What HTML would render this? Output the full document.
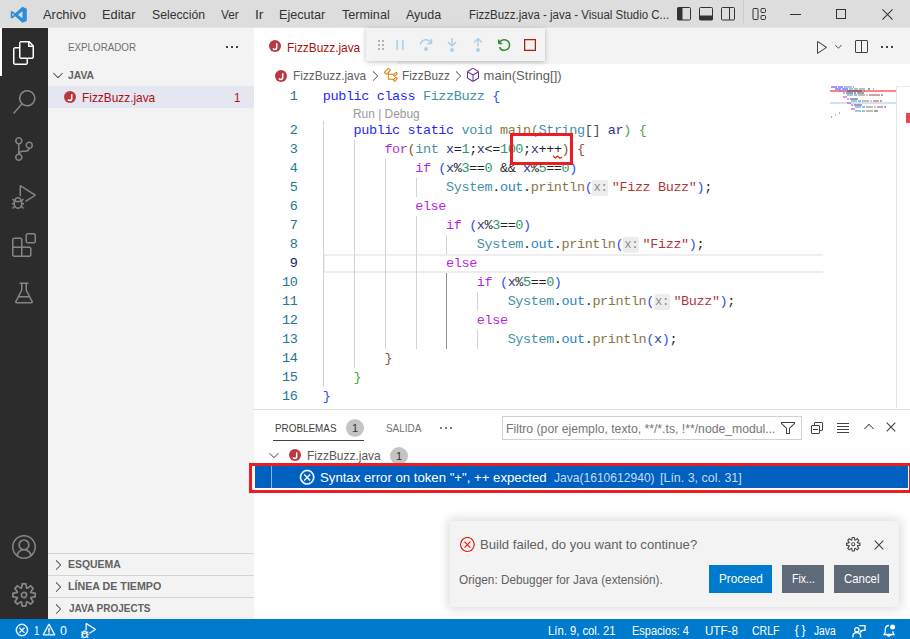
<!DOCTYPE html>
<html><head><meta charset="utf-8"><title>FizzBuzz.java - java - Visual Studio Code</title>
<style>
*{box-sizing:border-box;margin:0;padding:0}
html,body{width:910px;height:639px;overflow:hidden;background:#fff}
body{font-family:"Liberation Sans",sans-serif;font-size:13px;color:#333;position:relative}
.abs{position:absolute}
.t{position:absolute;white-space:nowrap;line-height:1}
.jic{width:12px;height:12px;border-radius:6px;background:#b8383d;color:#fff;font-size:9px;font-weight:bold;line-height:12.5px;text-align:center}
.code{opacity:0.86;position:absolute;font-family:"Liberation Mono",monospace;font-size:13.5px;letter-spacing:-0.4px;color:#000;white-space:pre;height:19px;line-height:19px}
.ln{position:absolute;font-family:"Liberation Mono",monospace;font-size:13.5px;letter-spacing:-0.4px;left:254px;width:43.4px;text-align:right;color:#237893;height:19px;line-height:19px}
.k{color:#0000ff}.c{color:#af00db}.ty{color:#267f99}.n{color:#098658}.s{color:#a31515}.v{color:#001080}.f{color:#795e26}.o{color:#0070c1}
.b1{color:#0431fa}.b2{color:#319331}.b3{color:#7b3814}
.hint{display:inline-block;background:#ebebeb;color:#7a7a7a;font-size:12.2px;letter-spacing:-0.4px;height:16px;line-height:16px;width:16px;text-align:center;margin-right:3.4px;vertical-align:-0.3px;border-radius:2px}
.badge{position:absolute;width:18px;height:18px;border-radius:9px;background:#c4c4c4;color:#333;font-size:11px;line-height:18px;text-align:center}
.btn{position:absolute;height:28px;line-height:28px;color:#fff;font-size:13px;text-align:center}
</style></head><body>
<div class="abs" style="left:0px;top:0px;width:910px;height:28px;background:#dddddd;"></div>
<div class="abs" style="left:0px;top:27px;width:910px;height:1.5px;background:#e6e6e6;"></div>
<div class="abs" style="left:0px;top:28px;width:48px;height:591px;background:#2c2c2c;"></div>
<div class="abs" style="left:48px;top:28px;width:206px;height:591px;background:#f3f3f3;"></div>
<div class="abs" style="left:254px;top:28px;width:656px;height:36px;background:#f3f3f3;"></div>
<div class="abs" style="left:254px;top:28px;width:143px;height:36px;background:#ffffff;"></div>
<div class="abs" style="left:0px;top:619px;width:910px;height:20px;background:#007acc;"></div>
<svg class="abs" style="left:9.700px;top:5.500px" width="17.500" height="17.500" viewBox="0 0 100 100"><path d="M71 4 L96 15 V85 L71 96 L30 58 L12 72 L4 67 V33 L12 28 L30 42 Z M71 30 L45 50 L71 70 Z M14 40 V60 L24 50 Z" fill="#2a8fd9" fill-rule="evenodd"/></svg>
<div class="t" style="left:43.20px;top:8.00px;font-size:13px;color:#333;transform:scaleX(0.9917);transform-origin:0 0;">Archivo</div>
<div class="t" style="left:102.20px;top:8.00px;font-size:13px;color:#333;transform:scaleX(0.9833);transform-origin:0 0;">Editar</div>
<div class="t" style="left:151.90px;top:8.00px;font-size:13px;color:#333;transform:scaleX(0.9401);transform-origin:0 0;">Selección</div>
<div class="t" style="left:221.40px;top:8.00px;font-size:13px;color:#333;transform:scaleX(0.9121);transform-origin:0 0;">Ver</div>
<div class="t" style="left:254.90px;top:8.00px;font-size:13px;color:#333;transform:scaleX(1.0688);transform-origin:0 0;">Ir</div>
<div class="t" style="left:279.20px;top:8.00px;font-size:13px;color:#333;transform:scaleX(0.9685);transform-origin:0 0;">Ejecutar</div>
<div class="t" style="left:341.70px;top:8.00px;font-size:13px;color:#333;transform:scaleX(0.9710);transform-origin:0 0;">Terminal</div>
<div class="t" style="left:405.70px;top:8.00px;font-size:13px;color:#333;transform:scaleX(0.9607);transform-origin:0 0;">Ayuda</div>
<div class="t" style="left:469.26px;top:8.84px;font-size:12px;color:#333;transform:scaleX(0.9567);transform-origin:0 0;">FizzBuzz.java - java - Visual Studio C...</div>
<svg class="abs" style="left:677px;top:7px" width="14" height="14" viewBox="0 0 14 14"><rect x="0.5" y="0.5" width="13" height="12.5" rx="1" fill="none" stroke="#333"/><rect x="0.5" y="0.5" width="5" height="12.5" fill="#333"/></svg>
<svg class="abs" style="left:699px;top:7px" width="14" height="14" viewBox="0 0 14 14"><rect x="0.5" y="0.5" width="13" height="12.5" rx="1" fill="none" stroke="#333"/><rect x="0.5" y="8.5" width="13" height="4.5" fill="#333"/></svg>
<svg class="abs" style="left:721px;top:7px" width="14" height="14" viewBox="0 0 14 14"><rect x="0.5" y="0.5" width="13" height="12.5" rx="1" fill="none" stroke="#333"/><path d="M8.5 0.500V13" stroke="#333"/></svg>
<div class="abs" style="left:743px;top:0px;width:1px;height:23px;background:#cbcbcb;"></div>
<svg class="abs" style="left:752px;top:7px" width="15" height="14" viewBox="0 0 15 14"><rect x="1" y="1.500" width="5" height="11" rx="1" fill="none" stroke="#333"/><rect x="9" y="1.500" width="4.500" height="4" rx="1" fill="none" stroke="#333"/><rect x="9" y="8.500" width="4.500" height="4" rx="1" fill="none" stroke="#333"/></svg>
<div class="abs" style="left:790px;top:14px;width:11px;height:1px;background:#333;"></div>
<div class="abs" style="left:836px;top:9px;width:10px;height:10px;border:1px solid #333"></div>
<svg class="abs" style="left:881.500px;top:8.500px" width="11" height="11" viewBox="0 0 12 12"><path d="M0.500 0.500L11.500 11.500M11.500 0.500L0.500 11.500" stroke="#333" stroke-width="1.100"/></svg>
<div class="abs" style="left:0px;top:28px;width:2px;height:48px;background:#fff;"></div>
<svg class="abs" style="left:12px;top:40.7px" width="24" height="24" viewBox="0 0 24 24"><path fill="#fff"  d="M17.5 0h-9L7 1.5V6H2.5L1 7.5v15.070L2.500 24h12.070L16 22.570V18h4.700l1.300-1.430V4.500L17.500 0zm0 2.120l2.380 2.380H17.500V2.120zm-3 20.380h-12v-15H7v9.070L8.500 18h6v4.500zm6-6h-12v-15H16V6h4.500v10.500z"/></svg>
<svg class="abs" style="left:12px;top:89.7px" width="24" height="24" viewBox="0 0 24 24"><path fill="#858585"  d="M15.250 0a8.250 8.250 0 0 0-6.180 13.720L1 22.880l1.120 1 8.050-9.120A8.251 8.251 0 1 0 15.250.010V0zm0 15a6.750 6.750 0 1 1 0-13.500 6.750 6.750 0 0 1 0 13.500z"/></svg>
<svg class="abs" style="left:12px;top:137px" width="24" height="24" viewBox="0 0 24 24"><path fill="#858585"  d="M21.007 8.222A3.738 3.738 0 0 0 15.045 5.200a3.737 3.737 0 0 0 1.156 6.583 2.988 2.988 0 0 1-2.668 1.670h-2.990a4.456 4.456 0 0 0-2.989 1.165V7.400a3.737 3.737 0 1 0-1.494 0v9.117a3.776 3.776 0 1 0 1.816.099 2.990 2.990 0 0 1 2.668-1.667h2.990a4.484 4.484 0 0 0 4.223-3.039 3.736 3.736 0 0 0 3.250-3.687zM4.565 3.738a2.242 2.242 0 1 1 4.484 0 2.242 2.242 0 0 1-4.484 0zm4.484 16.441a2.242 2.242 0 1 1-4.484 0 2.242 2.242 0 0 1 4.484 0zm8.221-9.715a2.242 2.242 0 1 1 0-4.485 2.242 2.242 0 0 1 0 4.485z"/></svg>
<svg class="abs" style="left:12px;top:185px" width="24" height="24" viewBox="0 0 24 24"><path fill="#858585"  d="M10.940 13.500l-1.320 1.320a3.730 3.730 0 0 0-7.240 0L1.060 13.500 0 14.560l1.720 1.720-.22.22V18H0v1.500h1.500v.08c.077.489.214.966.41 1.420L0 22.940 1.060 24l1.650-1.650A4.308 4.308 0 0 0 6 24a4.310 4.310 0 0 0 3.290-1.650L10.940 24 12 22.940 10.090 21c.198-.464.336-.951.41-1.450v-.1H12V18h-1.500v-1.500l-.22-.22L12 14.560l-1.060-1.060zM6 13.500a2.250 2.250 0 0 1 2.250 2.250h-4.500A2.250 2.250 0 0 1 6 13.500zm3 6a3.330 3.330 0 0 1-3 3 3.330 3.330 0 0 1-3-3v-2.250h6v2.250zm14.760-9.900v1.260L13.500 17.370V15.600l8.500-5.370L9 2v9.460a5.070 5.070 0 0 0-1.500-.72V.630L8.640 0l15.120 9.600z"/></svg>
<svg class="abs" style="left:12px;top:233px" width="24" height="24" viewBox="0 0 24 24"><path fill="#858585"  d="M13.500 1.500L15 0h7.500L24 1.500V9l-1.500 1.500H15L13.500 9V1.500zm1.500 0V9h7.500V1.500H15zM0 15V6l1.500-1.500H9L10.500 6v7.500H18l1.500 1.500v7.500L18 24H1.500L0 22.500V15zm9-1.500V6H1.500v7.500H9zM9 15H1.500v7.500H9V15zm1.500 7.500H18V15h-7.500v7.500z"/></svg>
<svg class="abs" style="left:12px;top:281px" width="24" height="24" viewBox="0 0 16 16"><path fill="#858585"  d="M13.893 13.558L10 6.006v-4h1v-1H9.994V1l-.456.005H5V2h1v3.952l-3.894 7.609A1 1 0 0 0 3 15h10a1 1 0 0 0 .893-1.442zm-7-7.150L7 6V2h2v4l.1.420 1.844 3.580H5.056l1.837-3.592zM3 14l1.543-3h6.914L13 14H3z"/></svg>
<svg class="abs" style="left:12px;top:535px" width="24" height="24" viewBox="0 0 16 16"><path fill="#858585"  d="M16 7.992C16 3.580 12.416 0 8 0S0 3.580 0 7.992c0 2.430 1.104 4.620 2.832 6.090.016.016.032.016.032.032.144.112.288.224.448.336.08.048.144.111.224.175A7.980 7.980 0 0 0 8.016 16a7.980 7.980 0 0 0 4.480-1.375c.08-.048.144-.111.224-.16.144-.111.304-.223.448-.335.016-.016.032-.016.032-.032 1.696-1.487 2.800-3.676 2.800-6.106zm-8 7.001c-1.504 0-2.880-.48-4.016-1.279.016-.128.048-.255.08-.383a4.170 4.170 0 0 1 .416-.991c.176-.304.384-.576.640-.816.240-.240.528-.463.816-.639.304-.176.624-.304.976-.4A4.150 4.150 0 0 1 8 10.342a4.185 4.185 0 0 1 2.928 1.166c.368.368.656.8.864 1.295.112.288.192.592.24.911A7.030 7.030 0 0 1 8 14.993zm-2.448-7.400a2.490 2.490 0 0 1-.208-1.024c0-.351.064-.703.208-1.023.144-.320.336-.607.576-.847.240-.240.528-.431.848-.575.320-.144.672-.208 1.024-.208.368 0 .704.064 1.024.208.320.144.608.336.848.575.240.240.432.528.576.847.144.320.208.672.208 1.023 0 .368-.064.704-.208 1.023a2.840 2.840 0 0 1-.576.848 2.840 2.840 0 0 1-.848.575 2.715 2.715 0 0 1-2.064 0 2.840 2.840 0 0 1-.848-.575 2.526 2.526 0 0 1-.560-.848zm7.424 5.306c0-.032-.016-.048-.016-.08a5.220 5.220 0 0 0-.688-1.406 4.883 4.883 0 0 0-1.088-1.135 5.207 5.207 0 0 0-1.040-.608 2.820 2.820 0 0 0 .464-.383 4.200 4.200 0 0 0 .624-.784 3.624 3.624 0 0 0 .528-1.934 3.710 3.710 0 0 0-.288-1.470 3.799 3.799 0 0 0-.816-1.199 3.845 3.845 0 0 0-1.200-.8 3.720 3.720 0 0 0-1.472-.287 3.720 3.720 0 0 0-1.472.288 3.631 3.631 0 0 0-1.200.815 3.840 3.840 0 0 0-.8 1.199 3.710 3.710 0 0 0-.288 1.470c0 .352.048.688.144 1.007.096.336.224.640.4.927.160.288.384.544.624.784.144.144.304.271.480.383a5.120 5.120 0 0 0-1.040.624c-.416.320-.784.703-1.088 1.119a4.999 4.999 0 0 0-.688 1.406c-.016.032-.016.064-.016.080C1.776 11.636.992 9.910.992 7.992.992 4.140 4.144.991 8 .991s7.008 3.149 7.008 7.001a6.960 6.960 0 0 1-2.032 4.907z"/></svg>
<svg class="abs" style="left:12px;top:583px" width="24" height="24" viewBox="0 0 24 24"><path fill="#858585" fill-rule="evenodd" d="M19.850 8.750l4.150.830v4.840l-4.150.830 2.350 3.520-3.430 3.430-3.520-2.350-.830 4.150H9.580l-.830-4.150-3.520 2.350-3.430-3.430 2.350-3.520L0 14.420V9.580l4.150-.830L1.800 5.230 5.230 1.800l3.520 2.350L9.580 0h4.840l.830 4.150 3.520-2.350 3.430 3.430-2.350 3.520zm-1.570 5.070l4-.810v-2l-4-.810-.540-1.300 2.290-3.430-1.430-1.430-3.430 2.290-1.300-.540-.810-4h-2l-.810 4-1.300.540-3.430-2.290-1.430 1.430L6.380 8.900l-.540 1.300-4 .810v2l4 .810.540 1.300-2.290 3.430 1.430 1.430 3.430-2.290 1.300.540.810 4h2l.810-4 1.300-.540 3.430 2.290 1.430-1.430-2.290-3.430.540-1.300zm-8.186-4.672A3.430 3.430 0 0 1 12 8.570 3.440 3.440 0 0 1 15.430 12a3.430 3.430 0 1 1-5.336-2.852zm.956 4.274c.281.188.612.288.950.288A1.700 1.700 0 0 0 13.710 12a1.710 1.710 0 1 0-2.660 1.422z"/></svg>
<div class="t" style="left:67.82px;top:42.19px;font-size:11px;color:#6f6f6f;transform:scaleX(0.8908);transform-origin:0 0;">EXPLORADOR</div>
<div class="abs" style="left:226px;top:46px;width:2px;height:2px;background:#424242;"></div>
<div class="abs" style="left:231px;top:46px;width:2px;height:2px;background:#424242;"></div>
<div class="abs" style="left:236px;top:46px;width:2px;height:2px;background:#424242;"></div>
<svg class="abs" style="left:50px;top:67px" width="16" height="16" viewBox="0 0 16 16"><path fill="#424242"  d="M7.976 10.072l4.357-4.357.62.618L8.284 11h-.618L3 6.333l.619-.618 4.357 4.357z"/></svg>
<div class="t" style="left:68.30px;top:69.69px;font-size:11px;color:#616161;font-weight:bold;transform:scaleX(0.9416);transform-origin:0 0;">JAVA</div>
<div class="abs" style="left:48px;top:86px;width:206px;height:22px;background:#e4e6f1;"></div>
<svg class="abs" style="left:64px;top:91px" width="12" height="12" viewBox="0 0 12 12"><circle cx="6" cy="6" r="6" fill="#bb3840"/><path d="M7.700 3.200 V7.600 Q7.700 9.500 5.900 9.500 Q4.500 9.500 4 8.400" fill="none" stroke="#fff" stroke-width="1.500"/></svg>
<div class="t" style="left:81.70px;top:90.80px;font-size:13px;color:#b01011;transform:scaleX(0.9127);transform-origin:0 0;">FizzBuzz.java</div>
<div class="t" style="left:234.00px;top:90.80px;font-size:13px;color:#b01011;transform:scaleX(0.8847);transform-origin:0 0;">1</div>
<div class="abs" style="left:48px;top:553px;width:206px;height:1px;background:#d4d4d4;"></div>
<svg class="abs" style="left:50.3px;top:557px" width="16" height="16" viewBox="0 0 16 16"><path fill="#424242"  d="M10.072 8.024L5.715 3.667l.618-.62L11 7.716v.618L6.333 13l-.618-.619 4.357-4.357z"/></svg>
<div class="t" style="left:67.82px;top:559.49px;font-size:11px;color:#616161;font-weight:bold;transform:scaleX(0.9488);transform-origin:0 0;">ESQUEMA</div>
<div class="abs" style="left:48px;top:575px;width:206px;height:1px;background:#d4d4d4;"></div>
<svg class="abs" style="left:50.3px;top:579px" width="16" height="16" viewBox="0 0 16 16"><path fill="#424242"  d="M10.072 8.024L5.715 3.667l.618-.62L11 7.716v.618L6.333 13l-.618-.619 4.357-4.357z"/></svg>
<div class="t" style="left:67.82px;top:581.49px;font-size:11px;color:#616161;font-weight:bold;transform:scaleX(0.9701);transform-origin:0 0;">LÍNEA DE TIEMPO</div>
<div class="abs" style="left:48px;top:597px;width:206px;height:1px;background:#d4d4d4;"></div>
<svg class="abs" style="left:50.3px;top:601px" width="16" height="16" viewBox="0 0 16 16"><path fill="#424242"  d="M10.072 8.024L5.715 3.667l.618-.62L11 7.716v.618L6.333 13l-.618-.619 4.357-4.357z"/></svg>
<div class="t" style="left:68.50px;top:603.49px;font-size:11px;color:#616161;font-weight:bold;transform:scaleX(0.9090);transform-origin:0 0;">JAVA PROJECTS</div>
<svg class="abs" style="left:269px;top:40px" width="12" height="12" viewBox="0 0 12 12"><circle cx="6" cy="6" r="6" fill="#bb3840"/><path d="M7.700 3.200 V7.600 Q7.700 9.500 5.900 9.500 Q4.500 9.500 4 8.400" fill="none" stroke="#fff" stroke-width="1.500"/></svg>
<div class="t" style="left:286.70px;top:40.50px;font-size:13px;color:#b01011;transform:scaleX(0.9127);transform-origin:0 0;">FizzBuzz.java</div>
<svg class="abs" style="left:814px;top:39px" width="16" height="16" viewBox="0 0 16 16"><path d="M3.780 2L3 2.410v12l.780.420 9-6V8l-9-6zM4 13.480V3.350l7.600 5.070L4 13.480z" fill="#424242"/></svg>
<svg class="abs" style="left:833px;top:41.2px" width="10.8" height="10.8" viewBox="0 0 16 16"><path fill="#424242"  d="M7.976 10.072l4.357-4.357.62.618L8.284 11h-.618L3 6.333l.619-.618 4.357 4.357z"/></svg>
<svg class="abs" style="left:853px;top:39px" width="16" height="16" viewBox="0 0 16 16"><path d="M14 1H3L2 2v11l1 1h11l1-1V2l-1-1zM8 13H3V2h5v11zm6 0H9V2h5v11z" fill="#424242"/></svg>
<div class="abs" style="left:881px;top:46px;width:2px;height:2px;background:#424242;"></div>
<div class="abs" style="left:886px;top:46px;width:2px;height:2px;background:#424242;"></div>
<div class="abs" style="left:891px;top:46px;width:2px;height:2px;background:#424242;"></div>
<svg class="abs" style="left:275px;top:69.5px" width="12" height="12" viewBox="0 0 12 12"><circle cx="6" cy="6" r="6" fill="#bb3840"/><path d="M7.700 3.200 V7.600 Q7.700 9.500 5.900 9.500 Q4.500 9.500 4 8.400" fill="none" stroke="#fff" stroke-width="1.500"/></svg>
<div class="t" style="left:292.70px;top:68.90px;font-size:13px;color:#616161;transform:scaleX(0.9127);transform-origin:0 0;">FizzBuzz.java</div>
<svg class="abs" style="left:367px;top:68px" width="16" height="16" viewBox="0 0 16 16"><path fill="#616161"  d="M10.072 8.024L5.715 3.667l.618-.62L11 7.716v.618L6.333 13l-.618-.619 4.357-4.357z"/></svg>
<svg class="abs" style="left:383px;top:67px" width="16" height="16" viewBox="0 0 16 16"><path fill="#d67e00"  d="M11.34 9.71h.71l2.67-2.67v-.71L13.38 5h-.7l-1.82 1.81h-5V5.56l1.86-1.85V3l-2-2H5L1 5v.71l2 2h.71l1.14-1.15v5.79l.5.5H10v.52l1.33 1.34h.71l2.67-2.67v-.71L13.37 10h-.7l-1.86 1.85h-5v-4H10v.48l1.34 1.38zm1.69-3.65l.63.63-2 2-.63-.63 2-2zm0 5l.63.63-2 2-.63-.63 2-2zM3.35 6.65l-1.29-1.3 3.29-3.29 1.3 1.29-3.3 3.3z"/></svg>
<div class="t" style="left:401.50px;top:68.90px;font-size:13px;color:#616161;transform:scaleX(0.9083);transform-origin:0 0;">FizzBuzz</div>
<svg class="abs" style="left:450px;top:68px" width="16" height="16" viewBox="0 0 16 16"><path fill="#616161"  d="M10.072 8.024L5.715 3.667l.618-.62L11 7.716v.618L6.333 13l-.618-.619 4.357-4.357z"/></svg>
<svg class="abs" style="left:465px;top:67px" width="16" height="16" viewBox="0 0 16 16"><path fill="#652d90"  d="M13.51 4l-5-3h-1l-5 3-.49.86v6l.49.85 5 3h1l5-3 .49-.85v-6L13.51 4zm-6 9.56l-4.5-2.7V5.7l4.5 2.45v5.41zM3.27 4.7l4.74-2.84 4.74 2.84-4.74 2.59L3.27 4.7zm9.74 6.16l-4.5 2.7V8.15l4.5-2.45v5.16z"/></svg>
<div class="t" style="left:483.60px;top:68.90px;font-size:13px;color:#616161;">main(String[])</div>
<div class="abs" style="left:366px;top:28px;width:179px;height:33px;background:#f3f3f3;box-shadow:0 1px 5px rgba(0,0,0,0.25)"></div>
<div class="abs" style="left:323px;top:254px;width:500px;height:19px;border:2px solid #eeeeee;border-right:none"></div>
<div class="abs" style="left:323px;top:121px;width:1px;height:19px;background:#d3d3d3;"></div>
<div class="abs" style="left:323px;top:140px;width:1px;height:19px;background:#d3d3d3;"></div>
<div class="abs" style="left:354px;top:140px;width:1px;height:19px;background:#d3d3d3;"></div>
<div class="abs" style="left:323px;top:159px;width:1px;height:19px;background:#d3d3d3;"></div>
<div class="abs" style="left:354px;top:159px;width:1px;height:19px;background:#d3d3d3;"></div>
<div class="abs" style="left:385px;top:159px;width:1px;height:19px;background:#d3d3d3;"></div>
<div class="abs" style="left:323px;top:178px;width:1px;height:19px;background:#d3d3d3;"></div>
<div class="abs" style="left:354px;top:178px;width:1px;height:19px;background:#d3d3d3;"></div>
<div class="abs" style="left:385px;top:178px;width:1px;height:19px;background:#d3d3d3;"></div>
<div class="abs" style="left:416px;top:178px;width:1px;height:19px;background:#d3d3d3;"></div>
<div class="abs" style="left:323px;top:197px;width:1px;height:19px;background:#d3d3d3;"></div>
<div class="abs" style="left:354px;top:197px;width:1px;height:19px;background:#d3d3d3;"></div>
<div class="abs" style="left:385px;top:197px;width:1px;height:19px;background:#d3d3d3;"></div>
<div class="abs" style="left:323px;top:216px;width:1px;height:19px;background:#d3d3d3;"></div>
<div class="abs" style="left:354px;top:216px;width:1px;height:19px;background:#d3d3d3;"></div>
<div class="abs" style="left:385px;top:216px;width:1px;height:19px;background:#d3d3d3;"></div>
<div class="abs" style="left:416px;top:216px;width:1px;height:19px;background:#d3d3d3;"></div>
<div class="abs" style="left:323px;top:235px;width:1px;height:19px;background:#d3d3d3;"></div>
<div class="abs" style="left:354px;top:235px;width:1px;height:19px;background:#d3d3d3;"></div>
<div class="abs" style="left:385px;top:235px;width:1px;height:19px;background:#d3d3d3;"></div>
<div class="abs" style="left:416px;top:235px;width:1px;height:19px;background:#d3d3d3;"></div>
<div class="abs" style="left:446px;top:235px;width:1px;height:19px;background:#d3d3d3;"></div>
<div class="abs" style="left:323px;top:254px;width:1px;height:19px;background:#d3d3d3;"></div>
<div class="abs" style="left:354px;top:254px;width:1px;height:19px;background:#d3d3d3;"></div>
<div class="abs" style="left:385px;top:254px;width:1px;height:19px;background:#d3d3d3;"></div>
<div class="abs" style="left:416px;top:254px;width:1px;height:19px;background:#d3d3d3;"></div>
<div class="abs" style="left:323px;top:273px;width:1px;height:19px;background:#d3d3d3;"></div>
<div class="abs" style="left:354px;top:273px;width:1px;height:19px;background:#d3d3d3;"></div>
<div class="abs" style="left:385px;top:273px;width:1px;height:19px;background:#d3d3d3;"></div>
<div class="abs" style="left:416px;top:273px;width:1px;height:19px;background:#d3d3d3;"></div>
<div class="abs" style="left:446px;top:273px;width:1px;height:19px;background:#939393;"></div>
<div class="abs" style="left:323px;top:292px;width:1px;height:19px;background:#d3d3d3;"></div>
<div class="abs" style="left:354px;top:292px;width:1px;height:19px;background:#d3d3d3;"></div>
<div class="abs" style="left:385px;top:292px;width:1px;height:19px;background:#d3d3d3;"></div>
<div class="abs" style="left:416px;top:292px;width:1px;height:19px;background:#d3d3d3;"></div>
<div class="abs" style="left:446px;top:292px;width:1px;height:19px;background:#939393;"></div>
<div class="abs" style="left:477px;top:292px;width:1px;height:19px;background:#d3d3d3;"></div>
<div class="abs" style="left:323px;top:311px;width:1px;height:19px;background:#d3d3d3;"></div>
<div class="abs" style="left:354px;top:311px;width:1px;height:19px;background:#d3d3d3;"></div>
<div class="abs" style="left:385px;top:311px;width:1px;height:19px;background:#d3d3d3;"></div>
<div class="abs" style="left:416px;top:311px;width:1px;height:19px;background:#d3d3d3;"></div>
<div class="abs" style="left:446px;top:311px;width:1px;height:19px;background:#939393;"></div>
<div class="abs" style="left:323px;top:330px;width:1px;height:19px;background:#d3d3d3;"></div>
<div class="abs" style="left:354px;top:330px;width:1px;height:19px;background:#d3d3d3;"></div>
<div class="abs" style="left:385px;top:330px;width:1px;height:19px;background:#d3d3d3;"></div>
<div class="abs" style="left:416px;top:330px;width:1px;height:19px;background:#d3d3d3;"></div>
<div class="abs" style="left:446px;top:330px;width:1px;height:19px;background:#939393;"></div>
<div class="abs" style="left:477px;top:330px;width:1px;height:19px;background:#d3d3d3;"></div>
<div class="abs" style="left:323px;top:349px;width:1px;height:19px;background:#d3d3d3;"></div>
<div class="abs" style="left:354px;top:349px;width:1px;height:19px;background:#d3d3d3;"></div>
<div class="abs" style="left:323px;top:368px;width:1px;height:19px;background:#d3d3d3;"></div>
<div class="ln" style="top:87px">1</div>
<div class="code" style="left:322.8px;top:87px"><span class="k">public</span> <span class="k">class</span> <span class="ty">FizzBuzz</span> <span class="b1">{</span></div>
<div class="ln" style="top:121px">2</div>
<div class="code" style="left:322.8px;top:121px">    <span class="k">public</span> <span class="k">static</span> <span class="ty">void</span> <span class="f">main</span><span class="b2">(</span><span class="ty">String</span><span style="color:#333">[]</span> <span class="v">ar</span><span class="b2">)</span> <span class="b2">{</span></div>
<div class="ln" style="top:140px">3</div>
<div class="code" style="left:322.8px;top:140px">        <span class="c">for</span><span class="b3">(</span><span class="ty">int</span> <span class="v">x</span>=<span class="n">1</span>;<span class="v">x</span>&lt;=<span class="n">100</span>;<span class="v">x</span>+++<span class="b3">)</span> <span class="b3">{</span></div>
<div class="ln" style="top:159px">4</div>
<div class="code" style="left:322.8px;top:159px">            <span class="c">if</span> <span class="b1">(</span><span class="v">x</span>%<span class="n">3</span>==<span class="n">0</span> &amp;&amp; <span class="v">x</span>%<span class="n">5</span>==<span class="n">0</span><span class="b1">)</span></div>
<div class="ln" style="top:178px">5</div>
<div class="code" style="left:322.8px;top:178px">                <span class="ty">System</span>.<span class="o">out</span>.<span class="f">println</span><span class="b1">(</span><span class="hint">x:</span><span class="s">"Fizz Buzz"</span><span class="b1">)</span>;</div>
<div class="ln" style="top:197px">6</div>
<div class="code" style="left:322.8px;top:197px">            <span class="c">else</span></div>
<div class="ln" style="top:216px">7</div>
<div class="code" style="left:322.8px;top:216px">                <span class="c">if</span> <span class="b1">(</span><span class="v">x</span>%<span class="n">3</span>==<span class="n">0</span><span class="b1">)</span></div>
<div class="ln" style="top:235px">8</div>
<div class="code" style="left:322.8px;top:235px">                    <span class="ty">System</span>.<span class="o">out</span>.<span class="f">println</span><span class="b1">(</span><span class="hint">x:</span><span class="s">"Fizz"</span><span class="b1">)</span>;</div>
<div class="ln" style="top:254px;color:#0b216f">9</div>
<div class="code" style="left:322.8px;top:254px">                <span class="c">else</span></div>
<div class="ln" style="top:273px">10</div>
<div class="code" style="left:322.8px;top:273px">                    <span class="c">if</span> <span class="b1">(</span><span class="v">x</span>%<span class="n">5</span>==<span class="n">0</span><span class="b1">)</span></div>
<div class="ln" style="top:292px">11</div>
<div class="code" style="left:322.8px;top:292px">                        <span class="ty">System</span>.<span class="o">out</span>.<span class="f">println</span><span class="b1">(</span><span class="hint">x:</span><span class="s">"Buzz"</span><span class="b1">)</span>;</div>
<div class="ln" style="top:311px">12</div>
<div class="code" style="left:322.8px;top:311px">                    <span class="c">else</span></div>
<div class="ln" style="top:330px">13</div>
<div class="code" style="left:322.8px;top:330px">                        <span class="ty">System</span>.<span class="o">out</span>.<span class="f">println</span><span class="b1">(</span><span class="v">x</span><span class="b1">)</span>;</div>
<div class="ln" style="top:349px">14</div>
<div class="code" style="left:322.8px;top:349px">        <span class="b3">}</span></div>
<div class="ln" style="top:368px">15</div>
<div class="code" style="left:322.8px;top:368px">    <span class="b2">}</span></div>
<div class="ln" style="top:387px">16</div>
<div class="code" style="left:322.8px;top:387px"><span class="b1">}</span></div>
<div class="t" style="left:353.06px;top:107.54px;font-size:12px;color:#999999;transform:scaleX(0.9921);transform-origin:0 0;">Run | Debug</div>
<svg class="abs" style="left:553.3px;top:155px" width="10" height="5" viewBox="0 0 10 5"><path d="M0.300 0.800 L2.300 3.200 L4.600 1 L7 3.400 L8.600 2.200" fill="none" stroke="#e51400" stroke-width="1.100" stroke-linejoin="round" stroke-linecap="round"/></svg>
<div class="abs" style="left:509.500px;top:133px;width:63.500px;height:32px;border:3px solid #ed1c24"></div>
<div class="abs" style="left:896px;top:86px;width:1px;height:322px;background:#e6e6e6;"></div>
<div class="abs" style="left:896px;top:86px;width:14px;height:1px;background:#ececec;"></div>
<div class="abs" style="left:906px;top:113px;width:4px;height:10px;background:#e8484d;"></div>
<div class="abs" style="left:830px;top:90px;width:66px;height:1.6px;background:#ff8585;"></div>
<div class="abs" style="left:830px;top:102.4px;width:66px;height:1.5px;background:#d0e2f4;"></div>
<div class="abs" style="left:831px;top:86px;width:6px;height:1.5px;background:#5b5bff;opacity:0.62"></div>
<div class="abs" style="left:838px;top:86px;width:5px;height:1.5px;background:#5b5bff;opacity:0.62"></div>
<div class="abs" style="left:844px;top:86px;width:8px;height:1.5px;background:#6aa7b8;opacity:0.62"></div>
<div class="abs" style="left:853px;top:86px;width:1px;height:1.5px;background:#5b7bff;opacity:0.62"></div>
<div class="abs" style="left:835px;top:88px;width:6px;height:1.5px;background:#5b5bff;opacity:0.62"></div>
<div class="abs" style="left:842px;top:88px;width:6px;height:1.5px;background:#5b5bff;opacity:0.62"></div>
<div class="abs" style="left:849px;top:88px;width:4px;height:1.5px;background:#6aa7b8;opacity:0.62"></div>
<div class="abs" style="left:854px;top:88px;width:4px;height:1.5px;background:#a8946a;opacity:0.62"></div>
<div class="abs" style="left:859px;top:88px;width:6px;height:1.5px;background:#6aa7b8;opacity:0.62"></div>
<div class="abs" style="left:868px;top:88px;width:2px;height:1.5px;background:#55679f;opacity:0.62"></div>
<div class="abs" style="left:873px;top:88px;width:1px;height:1.5px;background:#77b877;opacity:0.62"></div>
<div class="abs" style="left:839px;top:90px;width:3px;height:1.5px;background:#c75be6;opacity:0.62"></div>
<div class="abs" style="left:843px;top:90px;width:3px;height:1.5px;background:#6aa7b8;opacity:0.62"></div>
<div class="abs" style="left:847px;top:90px;width:15px;height:1.5px;background:#555a7a;opacity:0.62"></div>
<div class="abs" style="left:864px;top:90px;width:1px;height:1.5px;background:#a07a5a;opacity:0.62"></div>
<div class="abs" style="left:843px;top:92px;width:2px;height:1.5px;background:#c75be6;opacity:0.62"></div>
<div class="abs" style="left:846px;top:92px;width:7px;height:1.5px;background:#55678f;opacity:0.62"></div>
<div class="abs" style="left:854px;top:92px;width:2px;height:1.5px;background:#666;opacity:0.62"></div>
<div class="abs" style="left:857px;top:92px;width:7px;height:1.5px;background:#55678f;opacity:0.62"></div>
<div class="abs" style="left:847px;top:94px;width:6px;height:1.5px;background:#6aa7b8;opacity:0.62"></div>
<div class="abs" style="left:854px;top:94px;width:3px;height:1.5px;background:#4b9be0;opacity:0.62"></div>
<div class="abs" style="left:858px;top:94px;width:7px;height:1.5px;background:#a8946a;opacity:0.62"></div>
<div class="abs" style="left:866px;top:94px;width:2px;height:1.5px;background:#aaa;opacity:0.62"></div>
<div class="abs" style="left:869px;top:94px;width:11px;height:1.5px;background:#c46a6a;opacity:0.62"></div>
<div class="abs" style="left:881px;top:94px;width:2px;height:1.5px;background:#777;opacity:0.62"></div>
<div class="abs" style="left:843px;top:96px;width:4px;height:1.5px;background:#c75be6;opacity:0.62"></div>
<div class="abs" style="left:847px;top:98px;width:2px;height:1.5px;background:#c75be6;opacity:0.62"></div>
<div class="abs" style="left:850px;top:98px;width:8px;height:1.5px;background:#55678f;opacity:0.62"></div>
<div class="abs" style="left:851px;top:100px;width:6px;height:1.5px;background:#6aa7b8;opacity:0.62"></div>
<div class="abs" style="left:858px;top:100px;width:3px;height:1.5px;background:#4b9be0;opacity:0.62"></div>
<div class="abs" style="left:862px;top:100px;width:7px;height:1.5px;background:#a8946a;opacity:0.62"></div>
<div class="abs" style="left:870px;top:100px;width:2px;height:1.5px;background:#aaa;opacity:0.62"></div>
<div class="abs" style="left:873px;top:100px;width:6px;height:1.5px;background:#c46a6a;opacity:0.62"></div>
<div class="abs" style="left:880px;top:100px;width:2px;height:1.5px;background:#777;opacity:0.62"></div>
<div class="abs" style="left:847px;top:102px;width:4px;height:1.5px;background:#c75be6;opacity:0.62"></div>
<div class="abs" style="left:851px;top:104px;width:2px;height:1.5px;background:#c75be6;opacity:0.62"></div>
<div class="abs" style="left:854px;top:104px;width:8px;height:1.5px;background:#55678f;opacity:0.62"></div>
<div class="abs" style="left:855px;top:106px;width:6px;height:1.5px;background:#6aa7b8;opacity:0.62"></div>
<div class="abs" style="left:862px;top:106px;width:3px;height:1.5px;background:#4b9be0;opacity:0.62"></div>
<div class="abs" style="left:866px;top:106px;width:7px;height:1.5px;background:#a8946a;opacity:0.62"></div>
<div class="abs" style="left:874px;top:106px;width:2px;height:1.5px;background:#aaa;opacity:0.62"></div>
<div class="abs" style="left:877px;top:106px;width:6px;height:1.5px;background:#c46a6a;opacity:0.62"></div>
<div class="abs" style="left:884px;top:106px;width:2px;height:1.5px;background:#777;opacity:0.62"></div>
<div class="abs" style="left:851px;top:108px;width:4px;height:1.5px;background:#c75be6;opacity:0.62"></div>
<div class="abs" style="left:855px;top:110px;width:6px;height:1.5px;background:#6aa7b8;opacity:0.62"></div>
<div class="abs" style="left:862px;top:110px;width:3px;height:1.5px;background:#4b9be0;opacity:0.62"></div>
<div class="abs" style="left:866px;top:110px;width:7px;height:1.5px;background:#a8946a;opacity:0.62"></div>
<div class="abs" style="left:874px;top:110px;width:3px;height:1.5px;background:#55678f;opacity:0.62"></div>
<div class="abs" style="left:877px;top:110px;width:1px;height:1.5px;background:#777;opacity:0.62"></div>
<div class="abs" style="left:839px;top:112px;width:1px;height:1.5px;background:#a07a5a;opacity:0.62"></div>
<div class="abs" style="left:835px;top:114px;width:1px;height:1.5px;background:#77b877;opacity:0.62"></div>
<div class="abs" style="left:831px;top:116px;width:1px;height:1.5px;background:#5b7bff;opacity:0.62"></div>
<svg class="abs" style="left:372.5px;top:37px" width="16" height="16" viewBox="0 0 16 16"><path fill="#b2b2b2"  d="M5 3h2v2H5zm0 4h2v2H5zm0 4h2v2H5zm4-8h2v2H9zm0 4h2v2H9zm0 4h2v2H9z"/></svg>
<svg class="abs" style="left:392px;top:37px" width="16" height="16" viewBox="0 0 16 16"><path fill="#007acc" opacity="0.29" d="M4.500 3H6v10H4.500V3zm7 0v10H10V3h1.500z"/></svg>
<svg class="abs" style="left:417.5px;top:37px" width="16" height="16" viewBox="0 0 16 16"><path fill="#007acc" opacity="0.29" d="M14.250 5.750v-4h-1.500v2.542c-1.145-1.359-2.911-2.209-4.840-2.209-3.177 0-5.920 2.307-6.160 5.398l-.02.269h1.501l.022-.226c.212-2.195 2.202-3.940 4.656-3.940 1.736 0 3.244.875 4.050 2.166h-2.830v1.500h4.163l.962-.975V5.750h-.004zM8 14a2 2 0 1 0 0-4 2 2 0 0 0 0 4z"/></svg>
<svg class="abs" style="left:443.5px;top:37px" width="16" height="16" viewBox="0 0 16 16"><path fill="#007acc" opacity="0.29" d="M8 9.532h.542l3.905-3.905-1.061-1.060-2.637 2.610V1H7.251v6.177l-2.637-2.610-1.061 1.060 3.905 3.905H8zm1.956 3.481a2 2 0 1 1-4 0 2 2 0 0 1 4 0z"/></svg>
<svg class="abs" style="left:469.5px;top:37px" width="16" height="16" viewBox="0 0 16 16"><path fill="#007acc" opacity="0.29" d="M8 1h-.542L3.553 4.905l1.061 1.060 2.637-2.610v6.177h1.498V3.355l2.637 2.610 1.061-1.060L8.542 1H8zm1.956 12.013a2 2 0 1 1-4 0 2 2 0 0 1 4 0z"/></svg>
<svg class="abs" style="left:495.5px;top:37px" width="16" height="16" viewBox="0 0 16 16"><path fill="#388a34"  d="M12.750 8a4.500 4.500 0 0 1-8.610 1.834l-1.391.565A6.001 6.001 0 0 0 14.250 8 6 6 0 0 0 3.500 4.334V2.500H2v4l.750.750h3.500v-1.500H4.352A4.500 4.500 0 0 1 12.750 8z"/></svg>
<svg class="abs" style="left:521.5px;top:37px" width="16" height="16" viewBox="0 0 16 16"><path fill="#a1260d"  d="M2 2v12h12V2H2zm10.750 10.750h-9.500v-9.500h9.500v9.500z"/></svg>
<div class="abs" style="left:254px;top:408.5px;width:656px;height:1px;background:#dcdcdc;"></div>
<div class="t" style="left:274.92px;top:422.69px;font-size:11px;color:#424242;transform:scaleX(0.8979);transform-origin:0 0;">PROBLEMAS</div>
<div class="badge" style="left:346px;top:419px">1</div>
<div class="abs" style="left:273px;top:440px;width:91px;height:1px;background:#424242;"></div>
<div class="t" style="left:386.06px;top:422.69px;font-size:11px;color:#717171;transform:scaleX(0.9029);transform-origin:0 0;">SALIDA</div>
<div class="abs" style="left:440px;top:427px;width:2px;height:2px;background:#7a7a7a;"></div>
<div class="abs" style="left:445px;top:427px;width:2px;height:2px;background:#7a7a7a;"></div>
<div class="abs" style="left:450px;top:427px;width:2px;height:2px;background:#7a7a7a;"></div>
<div class="abs" style="left:502px;top:416px;width:300px;height:24px;background:#fff;border:1px solid #d2d2d2"></div>
<div class="t" style="left:505.90px;top:421.50px;font-size:13px;color:#767676;transform:scaleX(0.9395);transform-origin:0 0;">Filtro (por ejemplo, texto, **/*.ts, !**/node_modul...</div>
<svg class="abs" style="left:780px;top:420px" width="16" height="16" viewBox="0 0 16 16"><path fill="#424242"  d="M15 2v1.670l-5 4.759V14H6V8.429l-5-4.760V2h14zM7 8v5h2V8l5-4.760V3H2v.240L7 8z"/></svg>
<svg class="abs" style="left:809px;top:420px" width="16" height="16" viewBox="0 0 16 16"><path fill="#424242"  d="M9 9H4v1h5V9z M5 3l1-1h7l1 1v7l-1 1h-2v2l-1 1H3l-1-1V6l1-1h2V3zm1 2h4l1 1v4h2V3H6v2zm4 1H3v7h7V6z"/></svg>
<svg class="abs" style="left:835px;top:420px" width="16" height="16" viewBox="0 0 16 16"><path d="M2 3.500h12M2 6.500h12M2 9.500h12M2 12.500h12" stroke="#424242" stroke-width="1"/></svg>
<svg class="abs" style="left:861px;top:419px" width="16" height="16" viewBox="0 0 16 16"><path fill="#424242"  d="M8.024 5.928l-4.357 4.357-.62-.618L7.716 5h.618L13 9.667l-.619.618-4.357-4.357z"/></svg>
<svg class="abs" style="left:886px;top:422px" width="10" height="10" viewBox="0 0 10 10"><path d="M0.700 0.700L9.300 9.300M9.300 0.700L0.700 9.300" stroke="#424242" stroke-width="1.100"/></svg>
<svg class="abs" style="left:266px;top:447px" width="16" height="16" viewBox="0 0 16 16"><path fill="#646465"  d="M7.976 10.072l4.357-4.357.62.618L8.284 11h-.618L3 6.333l.619-.618 4.357 4.357z"/></svg>
<svg class="abs" style="left:289px;top:449px" width="12" height="12" viewBox="0 0 12 12"><circle cx="6" cy="6" r="6" fill="#bb3840"/><path d="M7.700 3.200 V7.600 Q7.700 9.500 5.900 9.500 Q4.500 9.500 4 8.400" fill="none" stroke="#fff" stroke-width="1.500"/></svg>
<div class="t" style="left:306.70px;top:449.00px;font-size:13px;color:#585858;transform:scaleX(0.9189);transform-origin:0 0;">FizzBuzz.java</div>
<div class="badge" style="left:390px;top:447px">1</div>
<div class="abs" style="left:255px;top:466px;width:653px;height:22px;background:#0060c0;"></div>
<div class="abs" style="left:271px;top:466px;width:1px;height:22px;background:rgba(255,255,255,0.55);"></div>
<svg class="abs" style="left:299px;top:469.2px" width="16.5" height="16.5" viewBox="0 0 16 16"><path fill="#ffffff" stroke="#fff" stroke-width="0.55" d="M8.6 1c1.6.1 3.1.9 4.2 2 1.3 1.4 2 3.1 2 5.1 0 1.6-.6 3.1-1.600 4.400-1 1.200-2.400 2.100-4 2.400-1.600.300-3.200.100-4.600-.700-1.400-.800-2.500-2-3.100-3.500C.9 9.200.8 7.500 1.300 6c.500-1.600 1.400-2.900 2.800-3.800C5.400 1.300 7 .900 8.600 1zm.500 12.900c1.300-.300 2.500-1 3.400-2.100.800-1.100 1.300-2.400 1.200-3.800 0-1.600-.600-3.200-1.700-4.300-1-1-2.200-1.600-3.600-1.700-1.300-.100-2.700.200-3.800 1-1.100.800-1.900 1.900-2.300 3.300-.400 1.300-.400 2.700.200 4 .600 1.300 1.500 2.300 2.700 3 1.200.700 2.600.900 3.900.600zM7.900 7.500L10.300 5l.700.700-2.400 2.500 2.400 2.500-.700.700-2.400-2.500-2.400 2.500-.700-.700 2.400-2.500-2.400-2.500.700-.700 2.400 2.500z"/></svg>
<div class="t" style="left:320.30px;top:471.00px;font-size:13px;color:#ffffff;transform:scaleX(1.0138);transform-origin:0 0;">Syntax error on token "+", ++ expected</div>
<div class="t" style="left:553.80px;top:471.00px;font-size:13px;color:#c4dcf4;transform:scaleX(0.9279);transform-origin:0 0;">Java(1610612940)</div>
<div class="t" style="left:660.20px;top:471.00px;font-size:13px;color:#c4dcf4;transform:scaleX(0.9580);transform-origin:0 0;">[Lín. 3, col. 31]</div>
<div class="abs" style="left:249px;top:463px;width:663px;height:30px;border:3px solid #ed1c24"></div>
<div class="abs" style="left:450px;top:521px;width:449px;height:86px;background:#f3f3f3;box-shadow:0 0 10px 2px rgba(0,0,0,0.15)"></div>
<svg class="abs" style="left:458.5px;top:535.5px" width="17" height="17" viewBox="0 0 16 16"><path fill="#e51400"  d="M8.6 1c1.6.1 3.1.9 4.2 2 1.3 1.4 2 3.1 2 5.1 0 1.6-.6 3.1-1.600 4.400-1 1.200-2.400 2.100-4 2.400-1.600.300-3.200.100-4.600-.700-1.400-.800-2.500-2-3.100-3.500C.9 9.200.8 7.500 1.300 6c.500-1.600 1.400-2.900 2.800-3.800C5.400 1.300 7 .900 8.600 1zm.500 12.900c1.300-.300 2.500-1 3.400-2.100.800-1.100 1.300-2.400 1.200-3.800 0-1.600-.600-3.200-1.700-4.300-1-1-2.200-1.600-3.600-1.700-1.300-.100-2.700.200-3.800 1-1.100.800-1.900 1.900-2.300 3.300-.400 1.300-.400 2.700.200 4 .600 1.300 1.500 2.300 2.700 3 1.200.700 2.600.900 3.900.600zM7.900 7.500L10.300 5l.700.700-2.400 2.500 2.400 2.500-.700.700-2.400-2.500-2.400 2.500-.700-.700 2.400-2.500-2.400-2.500.700-.700 2.400 2.500z"/></svg>
<div class="t" style="left:479.70px;top:537.80px;font-size:13px;color:#616161;transform:scaleX(1.0085);transform-origin:0 0;">Build failed, do you want to continue?</div>
<svg class="abs" style="left:846px;top:537px" width="14.5" height="14.5" viewBox="0 0 24 24"><path fill="#424242" fill-rule="evenodd" d="M19.850 8.750l4.150.830v4.840l-4.150.830 2.350 3.520-3.430 3.430-3.520-2.350-.830 4.150H9.580l-.830-4.150-3.520 2.350-3.430-3.430 2.350-3.520L0 14.420V9.580l4.150-.830L1.800 5.230 5.230 1.800l3.520 2.350L9.580 0h4.840l.830 4.150 3.520-2.350 3.430 3.430-2.350 3.520zm-1.570 5.070l4-.810v-2l-4-.810-.540-1.300 2.290-3.430-1.430-1.430-3.430 2.290-1.300-.540-.810-4h-2l-.810 4-1.300.540-3.430-2.290-1.430 1.430L6.380 8.900l-.540 1.300-4 .810v2l4 .810.540 1.300-2.290 3.430 1.430 1.430 3.430-2.290 1.300.540.810 4h2l.810-4 1.300-.540 3.430 2.290 1.430-1.430-2.290-3.430.540-1.300zm-8.186-4.672A3.430 3.430 0 0 1 12 8.570 3.440 3.440 0 0 1 15.430 12a3.430 3.430 0 1 1-5.336-2.852zm.956 4.274c.281.188.612.288.950.288A1.700 1.700 0 0 0 13.710 12a1.710 1.710 0 1 0-2.660 1.422z"/></svg>
<svg class="abs" style="left:874px;top:539.500px" width="10" height="10" viewBox="0 0 10 10"><path d="M0.700 0.700L9.300 9.300M9.300 0.700L0.700 9.300" stroke="#424242" stroke-width="1.100"/></svg>
<div class="t" style="left:458.63px;top:574.04px;font-size:12px;color:#616161;transform:scaleX(0.9822);transform-origin:0 0;">Origen: Debugger for Java (extensión).</div>
<div class="btn" style="left:709px;top:565px;width:63px;background:#007acc"></div>
<div class="btn" style="left:782px;top:565px;width:42px;background:#5f6a79"></div>
<div class="btn" style="left:834px;top:565px;width:55px;background:#5f6a79"></div>
<div class="t" style="left:718.70px;top:572.40px;font-size:13px;color:#fff;transform:scaleX(0.9025);transform-origin:0 0;">Proceed</div>
<div class="t" style="left:792.00px;top:572.40px;font-size:13px;color:#fff;transform:scaleX(0.8129);transform-origin:0 0;">Fix...</div>
<div class="t" style="left:843.90px;top:572.40px;font-size:13px;color:#fff;transform:scaleX(0.8772);transform-origin:0 0;">Cancel</div>
<svg class="abs" style="left:15.3px;top:623px" width="14" height="14" viewBox="0 0 16 16"><path fill="#fff" stroke="#fff" stroke-width="0.5" d="M8.6 1c1.6.1 3.1.9 4.2 2 1.3 1.4 2 3.1 2 5.1 0 1.6-.6 3.1-1.600 4.400-1 1.200-2.400 2.100-4 2.400-1.600.300-3.200.100-4.600-.700-1.400-.800-2.500-2-3.100-3.500C.9 9.200.8 7.500 1.300 6c.500-1.600 1.400-2.900 2.800-3.800C5.400 1.300 7 .900 8.600 1zm.500 12.900c1.300-.300 2.500-1 3.400-2.100.800-1.100 1.300-2.400 1.200-3.800 0-1.600-.600-3.200-1.700-4.300-1-1-2.200-1.600-3.600-1.700-1.300-.100-2.700.200-3.800 1-1.100.800-1.900 1.900-2.300 3.300-.400 1.300-.400 2.700.200 4 .600 1.300 1.500 2.300 2.700 3 1.200.700 2.600.900 3.900.600zM7.900 7.500L10.300 5l.700.700-2.400 2.500 2.400 2.500-.700.700-2.400-2.500-2.400 2.500-.700-.700 2.400-2.500-2.400-2.500.700-.700 2.400 2.500z"/></svg>
<div class="t" style="left:33.50px;top:624.84px;font-size:12px;color:#fff;transform:scaleX(0.8075);transform-origin:0 0;">1</div>
<svg class="abs" style="left:42.3px;top:622.7px" width="14" height="14" viewBox="0 0 16 16"><path fill="#fff" stroke="#fff" stroke-width="0.5" d="M7.560 1h.880l6.540 12.260-.440.740H1.440L1 13.260 7.560 1zM8 2.280L2.280 13H13.700L8 2.280zM8.625 12v-1h-1.250v1h1.250zm-1.250-2V6h1.250v4h-1.250z"/></svg>
<div class="t" style="left:60.00px;top:624.84px;font-size:12px;color:#fff;transform:scaleX(1.0318);transform-origin:0 0;">0</div>
<svg class="abs" style="left:80.5px;top:623px" width="15" height="15" viewBox="0 0 24 24"><path fill="#fff" stroke="#fff" stroke-width="0.5" d="M10.940 13.500l-1.320 1.320a3.730 3.730 0 0 0-7.240 0L1.060 13.500 0 14.560l1.720 1.720-.22.22V18H0v1.500h1.500v.08c.077.489.214.966.41 1.420L0 22.940 1.060 24l1.650-1.650A4.308 4.308 0 0 0 6 24a4.310 4.310 0 0 0 3.290-1.650L10.940 24 12 22.940 10.090 21c.198-.464.336-.951.41-1.450v-.1H12V18h-1.500v-1.500l-.22-.22L12 14.560l-1.060-1.060zM6 13.500a2.250 2.250 0 0 1 2.250 2.250h-4.500A2.250 2.250 0 0 1 6 13.500zm3 6a3.330 3.330 0 0 1-3 3 3.330 3.330 0 0 1-3-3v-2.250h6v2.250zm14.760-9.900v1.260L13.500 17.370V15.600l8.500-5.370L9 2v9.460a5.070 5.070 0 0 0-1.500-.72V.630L8.640 0l15.120 9.600z"/></svg>
<div class="t" style="left:547.86px;top:624.84px;font-size:12px;color:#fff;transform:scaleX(0.9374);transform-origin:0 0;">Lín. 9, col. 21</div>
<div class="t" style="left:632.26px;top:624.84px;font-size:12px;color:#fff;transform:scaleX(0.9177);transform-origin:0 0;">Espacios: 4</div>
<div class="t" style="left:704.56px;top:624.84px;font-size:12px;color:#fff;transform:scaleX(0.9658);transform-origin:0 0;">UTF-8</div>
<div class="t" style="left:752.43px;top:624.84px;font-size:12px;color:#fff;transform:scaleX(0.8764);transform-origin:0 0;">CRLF</div>
<div class="t" style="left:794.70px;top:624.14px;font-size:12px;color:#fff;">{</div>
<div class="t" style="left:801.50px;top:624.14px;font-size:12px;color:#fff;">}</div>
<div class="t" style="left:813.60px;top:624.84px;font-size:12px;color:#fff;transform:scaleX(0.8518);transform-origin:0 0;">Java</div>
<svg class="abs" style="left:851.500px;top:623.500px" width="14" height="14" viewBox="0 0 14 14"><g fill="none" stroke="#fff" stroke-width="1.300"><circle cx="4.800" cy="5.800" r="2.200"/><path d="M1 13.500 V12 Q1 8.700 4.800 8.700 Q8.600 8.700 8.600 12 V13.500"/><path d="M7.200 1.700 H13 V6.300 H10.500 L8.800 8 V6.300"/></g></svg>
<svg class="abs" style="left:882px;top:623.500px" width="14" height="14" viewBox="0 0 14 14"><g fill="none" stroke="#fff" stroke-width="1.300"><path d="M7 1.500 Q3.300 1.500 3.300 5.500 V8.200 L2 10.500 H12 L10.900 8.200 V7.200"/><path d="M5.300 10.800 Q7 13.600 8.700 10.800"/></g><circle cx="10.600" cy="3" r="2.500" fill="#fff"/></svg>
</body></html>
